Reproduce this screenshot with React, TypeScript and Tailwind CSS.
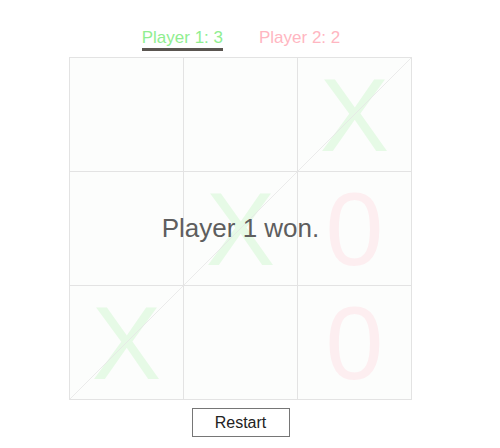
import { useState } from 'react';

type Mark = 'X' | '0' | null;

const font = { fontFamily: '"Liberation Sans", Arial, sans-serif' };

function Cell({ mark }: { mark: Mark }) {
  return (
    <div className="w-[114px] h-[114px] border-r border-b border-[#e3e3e3] bg-[#fcfdfc] flex items-center justify-center">
      {mark === 'X' && <span className="text-[104px] leading-none text-[#e6fae6]">X</span>}
      {mark === '0' && <span className="text-[104px] leading-none text-[#fdeef0]">0</span>}
    </div>
  );
}

export default function App() {
  const [board] = useState<Mark[]>([null, null, 'X', null, 'X', '0', 'X', null, '0']);
  const [score] = useState({ p1: 3, p2: 2 });

  return (
    <div className="w-[481px] min-h-[448px] bg-white flex flex-col items-center pt-[28px]" style={font}>
      {/* Scoreboard */}
      <div className="flex gap-[36px] ml-[1px]">
        <span className="text-[17px] leading-[20px] text-[#90ee90] border-b-[3px] border-[#5a5550]">
          Player 1: {score.p1}
        </span>
        <span className="text-[17px] leading-[20px] text-[#ffb6c1] border-b-[3px] border-transparent">
          Player 2: {score.p2}
        </span>
      </div>

      {/* Board */}
      <div className="relative mt-[6px]">
        <div className="grid grid-cols-3 border-l border-t border-[#e3e3e3]">
          {board.map((m, i) => (
            <Cell key={i} mark={m} />
          ))}
        </div>
        <svg className="absolute inset-0 pointer-events-none" width="343" height="343" viewBox="0 0 343 343">
          <line x1="0.5" y1="342.5" x2="342.5" y2="0.5" stroke="#e6e6e6" strokeWidth="0.8" />
        </svg>
        <div className="absolute inset-0 flex items-center justify-center">
          <span className="text-[26px] text-[#5e5e5e]">Player 1 won.</span>
        </div>
      </div>

      <button className="mt-[8px] w-[98px] h-[29px] border border-[#767676] bg-white text-[16px] text-[#222]">
        Restart
      </button>
    </div>
  );
}
